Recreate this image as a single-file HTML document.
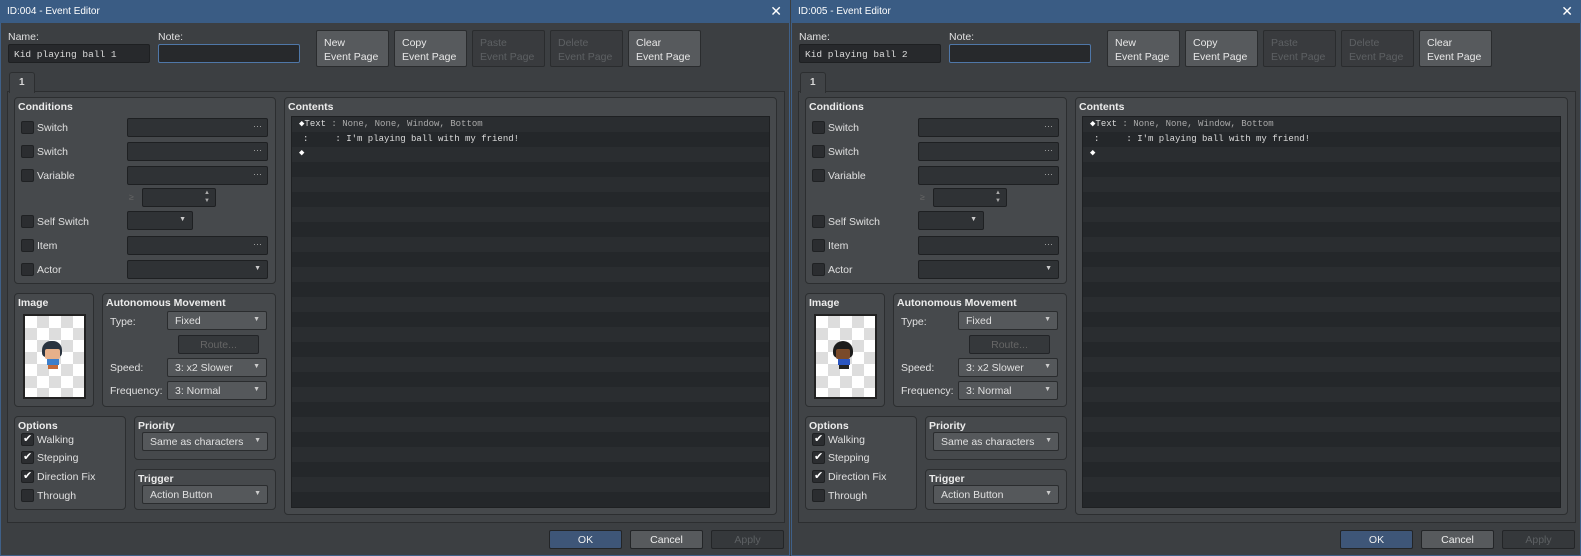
<!DOCTYPE html>
<html><head><meta charset="utf-8"><style>
*{box-sizing:border-box;margin:0;padding:0}
body{width:1581px;height:556px;background:#3b3e41;font-family:"Liberation Sans",sans-serif;font-size:10.5px;color:#d8d8d8;position:relative;overflow:hidden}
.dlg{position:absolute;top:0;width:790px;height:556px;background:#3c3f42;border:1px solid #3f6088;border-top:none}
.tb{position:absolute;left:-1px;right:-1px;top:0;height:23px;background:#3a5c84;color:#fff;font-size:10px;padding:6px 0 0 7px}
.x{position:absolute;right:8px;top:3px;font-size:14px;color:#fff}
.a{position:absolute}
.lbl{position:absolute;font-size:10.5px;color:#e0e0e0}
.inp{position:absolute;background:#27292c;border:1px solid #1e2022;border-radius:2px}
.btn{position:absolute;width:73px;height:37px;background:#575a5d;border:1px solid #2a2c2e;border-radius:2px;color:#e8e8e8;padding:5px 0 0 7px;line-height:14px;font-size:10.5px}
.btn.d{background:#393b3e;color:#5d6063}
.grp{position:absolute;background:#46494c;border:1px solid #2c2e30;border-radius:4px}
.gt{position:absolute;left:3px;top:3px;font-weight:bold;font-size:10.5px;color:#ececec}
.cb{position:absolute;width:13px;height:13px;background:#2b2d30;border:1px solid #1f2123;border-radius:2px}
.cb.k::after{content:"✔";position:absolute;left:1px;top:-2px;font-size:11px;color:#fff}
.fld{position:absolute;height:19px;background:#2f3235;border:1px solid #1e2022;border-radius:2px}
.dots::after{content:"···";position:absolute;right:5px;top:2px;font-size:9px;color:#aaa}
.dd{position:absolute;height:19px;background:#55585b;border:1px solid #2a2c2e;border-radius:2px;color:#e0e0e0;padding:3px 0 0 7px}
.dd::after{content:"▼";position:absolute;right:6px;top:4px;font-size:7px;color:#ccc}
.dd.e{background:#2f3235;border-color:#1e2022}
.list{position:absolute;left:290px;top:116px;width:479px;height:392px;border:1px solid #1e2022;background:repeating-linear-gradient(#2a2d30 0 15px,#24272a 15px 30px)}
.mono{font-family:"Liberation Mono",monospace;font-size:9px;color:#dcdcdc;position:absolute}
.ck{background-color:#fff;background-image:linear-gradient(45deg,#ddd 25%,transparent 25%,transparent 75%,#ddd 75%),linear-gradient(45deg,#ddd 25%,transparent 25%,transparent 75%,#ddd 75%);background-size:24px 24px;background-position:0 0,12px 12px}
.fb{position:absolute;width:73px;height:19px;border:1px solid #232527;border-radius:2px;text-align:center;padding-top:3px;font-size:10.5px}
</style></head><body>

<div class="dlg" style="left:0">
<div class="tb">ID:004 - Event Editor<span class="x">✕</span></div>
<div class="lbl" style="left:7px;top:31px">Name:</div>
<div class="inp mono" style="left:7px;top:44px;width:142px;height:19px;padding:4px 0 0 5px;font-size:9.5px">Kid playing ball 1</div>
<div class="lbl" style="left:157px;top:31px">Note:</div>
<div class="inp" style="left:157px;top:44px;width:142px;height:19px;border:1px solid #4f77a8"></div>
<div class="btn" style="left:315px;top:30px">New<br>Event Page</div>
<div class="btn" style="left:393px;top:30px">Copy<br>Event Page</div>
<div class="btn d" style="left:471px;top:30px">Paste<br>Event Page</div>
<div class="btn d" style="left:549px;top:30px">Delete<br>Event Page</div>
<div class="btn" style="left:627px;top:30px">Clear<br>Event Page</div>
<div class="a" style="left:6px;top:91px;width:778px;height:432px;border:1px solid #2c2e30;background:#404346"></div>
<div class="a" style="left:8px;top:72px;width:26px;height:21px;background:#404346;border:1px solid #2c2e30;border-bottom:none;border-radius:3px 3px 0 0;padding:4px 0 0 9px;font-weight:bold;font-size:10px">1</div>
<div class="grp" style="left:13px;top:97px;width:262px;height:187px"><div class="gt">Conditions</div></div>
<div class="cb" style="left:20px;top:121px"></div><div class="lbl" style="left:36px;top:122px">Switch</div><div class="fld dots" style="left:126px;top:118px;width:141px"></div>
<div class="cb" style="left:20px;top:145px"></div><div class="lbl" style="left:36px;top:146px">Switch</div><div class="fld dots" style="left:126px;top:142px;width:141px"></div>
<div class="cb" style="left:20px;top:169px"></div><div class="lbl" style="left:36px;top:170px">Variable</div><div class="fld dots" style="left:126px;top:166px;width:141px"></div>
<div class="lbl" style="left:128px;top:192px;color:#666;font-size:9px">≥</div><div class="fld" style="left:141px;top:188px;width:74px"><span style="position:absolute;right:5px;top:0;font-size:6px;color:#aaa;line-height:8px">▲<br>▼</span></div>
<div class="cb" style="left:20px;top:215px"></div><div class="lbl" style="left:36px;top:216px">Self Switch</div><div class="dd e" style="left:126px;top:211px;width:66px"></div>
<div class="cb" style="left:20px;top:239px"></div><div class="lbl" style="left:36px;top:240px">Item</div><div class="fld dots" style="left:126px;top:236px;width:141px"></div>
<div class="cb" style="left:20px;top:263px"></div><div class="lbl" style="left:36px;top:264px">Actor</div><div class="dd e" style="left:126px;top:260px;width:141px"></div>
<div class="grp" style="left:13px;top:293px;width:80px;height:114px"><div class="gt">Image</div></div>
<div class="a ck" style="left:22px;top:314px;width:63px;height:85px;border:2px solid #222"></div>
<div class="a" style="left:41px;top:341px;width:20px;height:16px;background:#2a3440;border-radius:9px 9px 4px 4px"></div>
<div class="a" style="left:44px;top:349px;width:15px;height:10px;background:#e6b08a;border-radius:2px"></div>
<div class="a" style="left:46px;top:359px;width:12px;height:6px;background:#3d7fcc"></div>
<div class="a" style="left:47px;top:365px;width:10px;height:4px;background:#c46a3a"></div>
<div class="grp" style="left:101px;top:293px;width:174px;height:114px"><div class="gt">Autonomous Movement</div></div>
<div class="lbl" style="left:109px;top:316px">Type:</div><div class="dd" style="left:166px;top:311px;width:100px">Fixed</div>
<div class="a" style="left:177px;top:335px;width:81px;height:19px;background:#35383b;border:1px solid #222427;border-radius:2px;color:#666;text-align:center;padding-top:3px">Route...</div>
<div class="lbl" style="left:109px;top:362px">Speed:</div><div class="dd" style="left:166px;top:358px;width:100px">3: x2 Slower</div>
<div class="lbl" style="left:109px;top:385px">Frequency:</div><div class="dd" style="left:166px;top:381px;width:100px">3: Normal</div>
<div class="grp" style="left:13px;top:416px;width:112px;height:94px"><div class="gt">Options</div></div>
<div class="cb k" style="left:20px;top:433px"></div><div class="lbl" style="left:36px;top:434px">Walking</div>
<div class="cb k" style="left:20px;top:451px"></div><div class="lbl" style="left:36px;top:452px">Stepping</div>
<div class="cb k" style="left:20px;top:470px"></div><div class="lbl" style="left:36px;top:471px">Direction Fix</div>
<div class="cb" style="left:20px;top:489px"></div><div class="lbl" style="left:36px;top:490px">Through</div>
<div class="grp" style="left:133px;top:416px;width:142px;height:44px"><div class="gt">Priority</div></div>
<div class="dd" style="left:141px;top:432px;width:126px">Same as characters</div>
<div class="grp" style="left:133px;top:469px;width:142px;height:41px"><div class="gt">Trigger</div></div>
<div class="dd" style="left:141px;top:485px;width:126px">Action Button</div>
<div class="grp" style="left:283px;top:97px;width:493px;height:418px"><div class="gt">Contents</div></div>
<div class="list"></div>
<div class="mono" style="left:298px;top:119px"><span style="color:#fff">◆</span>Text<span style="color:#aaa"> : None, None, Window, Bottom</span></div>
<div class="mono" style="left:302px;top:134px">:&nbsp;&nbsp;&nbsp;&nbsp;&nbsp;: I'm playing ball with my friend!</div>
<div class="mono" style="left:298px;top:148px;color:#fff">◆</div>
<div class="fb" style="left:548px;top:530px;background:#3e5678;color:#eee">OK</div>
<div class="fb" style="left:629px;top:530px;background:#575a5d;color:#eee">Cancel</div>
<div class="fb" style="left:710px;top:530px;background:#35383b;color:#5d6063">Apply</div>
</div>

<div class="dlg" style="left:791px">
<div class="tb">ID:005 - Event Editor<span class="x">✕</span></div>
<div class="lbl" style="left:7px;top:31px">Name:</div>
<div class="inp mono" style="left:7px;top:44px;width:142px;height:19px;padding:4px 0 0 5px;font-size:9.5px">Kid playing ball 2</div>
<div class="lbl" style="left:157px;top:31px">Note:</div>
<div class="inp" style="left:157px;top:44px;width:142px;height:19px;border:1px solid #4f77a8"></div>
<div class="btn" style="left:315px;top:30px">New<br>Event Page</div>
<div class="btn" style="left:393px;top:30px">Copy<br>Event Page</div>
<div class="btn d" style="left:471px;top:30px">Paste<br>Event Page</div>
<div class="btn d" style="left:549px;top:30px">Delete<br>Event Page</div>
<div class="btn" style="left:627px;top:30px">Clear<br>Event Page</div>
<div class="a" style="left:6px;top:91px;width:778px;height:432px;border:1px solid #2c2e30;background:#404346"></div>
<div class="a" style="left:8px;top:72px;width:26px;height:21px;background:#404346;border:1px solid #2c2e30;border-bottom:none;border-radius:3px 3px 0 0;padding:4px 0 0 9px;font-weight:bold;font-size:10px">1</div>
<div class="grp" style="left:13px;top:97px;width:262px;height:187px"><div class="gt">Conditions</div></div>
<div class="cb" style="left:20px;top:121px"></div><div class="lbl" style="left:36px;top:122px">Switch</div><div class="fld dots" style="left:126px;top:118px;width:141px"></div>
<div class="cb" style="left:20px;top:145px"></div><div class="lbl" style="left:36px;top:146px">Switch</div><div class="fld dots" style="left:126px;top:142px;width:141px"></div>
<div class="cb" style="left:20px;top:169px"></div><div class="lbl" style="left:36px;top:170px">Variable</div><div class="fld dots" style="left:126px;top:166px;width:141px"></div>
<div class="lbl" style="left:128px;top:192px;color:#666;font-size:9px">≥</div><div class="fld" style="left:141px;top:188px;width:74px"><span style="position:absolute;right:5px;top:0;font-size:6px;color:#aaa;line-height:8px">▲<br>▼</span></div>
<div class="cb" style="left:20px;top:215px"></div><div class="lbl" style="left:36px;top:216px">Self Switch</div><div class="dd e" style="left:126px;top:211px;width:66px"></div>
<div class="cb" style="left:20px;top:239px"></div><div class="lbl" style="left:36px;top:240px">Item</div><div class="fld dots" style="left:126px;top:236px;width:141px"></div>
<div class="cb" style="left:20px;top:263px"></div><div class="lbl" style="left:36px;top:264px">Actor</div><div class="dd e" style="left:126px;top:260px;width:141px"></div>
<div class="grp" style="left:13px;top:293px;width:80px;height:114px"><div class="gt">Image</div></div>
<div class="a ck" style="left:22px;top:314px;width:63px;height:85px;border:2px solid #222"></div>
<div class="a" style="left:41px;top:341px;width:20px;height:17px;background:#1c1c1c;border-radius:10px 10px 5px 5px"></div>
<div class="a" style="left:44px;top:349px;width:14px;height:10px;background:#7a4a2a;border-radius:2px"></div>
<div class="a" style="left:46px;top:359px;width:12px;height:6px;background:#2a55c0"></div>
<div class="a" style="left:47px;top:365px;width:10px;height:4px;background:#222"></div>
<div class="grp" style="left:101px;top:293px;width:174px;height:114px"><div class="gt">Autonomous Movement</div></div>
<div class="lbl" style="left:109px;top:316px">Type:</div><div class="dd" style="left:166px;top:311px;width:100px">Fixed</div>
<div class="a" style="left:177px;top:335px;width:81px;height:19px;background:#35383b;border:1px solid #222427;border-radius:2px;color:#666;text-align:center;padding-top:3px">Route...</div>
<div class="lbl" style="left:109px;top:362px">Speed:</div><div class="dd" style="left:166px;top:358px;width:100px">3: x2 Slower</div>
<div class="lbl" style="left:109px;top:385px">Frequency:</div><div class="dd" style="left:166px;top:381px;width:100px">3: Normal</div>
<div class="grp" style="left:13px;top:416px;width:112px;height:94px"><div class="gt">Options</div></div>
<div class="cb k" style="left:20px;top:433px"></div><div class="lbl" style="left:36px;top:434px">Walking</div>
<div class="cb k" style="left:20px;top:451px"></div><div class="lbl" style="left:36px;top:452px">Stepping</div>
<div class="cb k" style="left:20px;top:470px"></div><div class="lbl" style="left:36px;top:471px">Direction Fix</div>
<div class="cb" style="left:20px;top:489px"></div><div class="lbl" style="left:36px;top:490px">Through</div>
<div class="grp" style="left:133px;top:416px;width:142px;height:44px"><div class="gt">Priority</div></div>
<div class="dd" style="left:141px;top:432px;width:126px">Same as characters</div>
<div class="grp" style="left:133px;top:469px;width:142px;height:41px"><div class="gt">Trigger</div></div>
<div class="dd" style="left:141px;top:485px;width:126px">Action Button</div>
<div class="grp" style="left:283px;top:97px;width:493px;height:418px"><div class="gt">Contents</div></div>
<div class="list"></div>
<div class="mono" style="left:298px;top:119px"><span style="color:#fff">◆</span>Text<span style="color:#aaa"> : None, None, Window, Bottom</span></div>
<div class="mono" style="left:302px;top:134px">:&nbsp;&nbsp;&nbsp;&nbsp;&nbsp;: I'm playing ball with my friend!</div>
<div class="mono" style="left:298px;top:148px;color:#fff">◆</div>
<div class="fb" style="left:548px;top:530px;background:#3e5678;color:#eee">OK</div>
<div class="fb" style="left:629px;top:530px;background:#575a5d;color:#eee">Cancel</div>
<div class="fb" style="left:710px;top:530px;background:#35383b;color:#5d6063">Apply</div>
</div>
</body></html>
